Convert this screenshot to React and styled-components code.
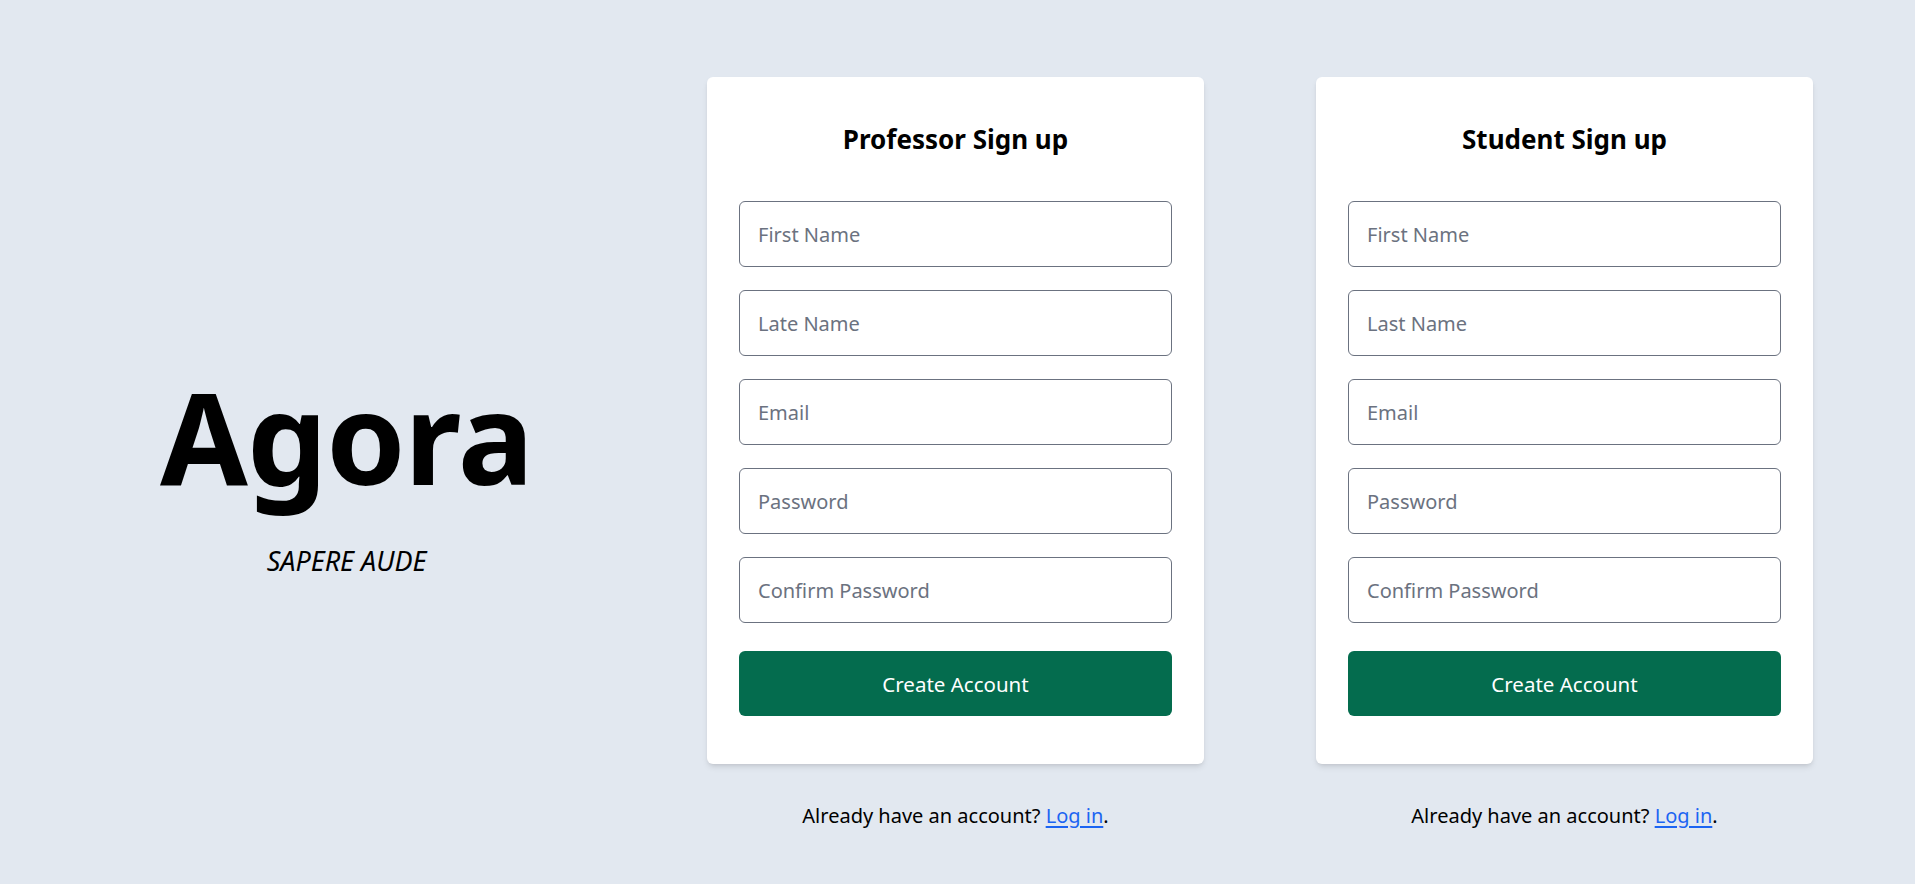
import React from 'react'
import styled, { createGlobalStyle } from 'styled-components'

const GlobalStyle = createGlobalStyle`
    * {
        box-sizing: border-box;
    }
    body {
        margin: 0;
        background: #e2e8f0;
        font-family: "Noto Sans", "Open Sans", sans-serif;
        color: #000;
    }
`

const Page = styled.main`
    display: grid;
    grid-template-columns: repeat(3, 497px);
    column-gap: 112px;
    justify-content: center;
    align-items: start;
    min-height: 100vh;
    padding: 77px 4px 0 0;
`

const Hero = styled.section`
    display: flex;
    flex-direction: column;
    align-items: center;
    padding-top: 283px;
`

const Brand = styled.h1`
    margin: 0;
    font-size: 127px;
    font-weight: 700;
    line-height: 1.2;
    letter-spacing: -1px;
`

const Motto = styled.p`
    margin: 30px 0 0;
    font-size: 27px;
    font-style: italic;
`

const Column = styled.section`
    display: flex;
    flex-direction: column;
`

const Card = styled.form`
    display: flex;
    flex-direction: column;
    gap: 23px;
    padding: 43px 32px 48px;
    background: #fff;
    border-radius: 6px;
    box-shadow: 0 4px 6px -1px rgba(0, 0, 0, 0.1), 0 2px 4px -2px rgba(0, 0, 0, 0.1);
`

const Title = styled.h2`
    margin: 0 0 20px;
    text-align: center;
    font-size: 26px;
    font-weight: 700;
    line-height: 38px;
`

const Field = styled.input`
    height: 66px;
    padding: 0 18px;
    border: 1px solid #6b7280;
    border-radius: 6px;
    background: #fff;
    font-family: inherit;
    font-size: 20px;
    color: #111827;
    outline: none;

    &::placeholder {
        color: #6b7280;
    }
`

const Submit = styled.button`
    height: 65px;
    margin-top: 5px;
    border: none;
    border-radius: 6px;
    background: #046c4e;
    color: #fff;
    font-family: inherit;
    font-size: 20.5px;
    cursor: pointer;
`

const Footer = styled.p`
    margin: 38px 0 0;
    text-align: center;
    font-size: 20px;
`

const LoginLink = styled.a`
    color: #1c64f2;
    text-decoration: underline;
    text-underline-offset: 3px;
`

const forms = [
    {
        title: 'Professor Sign up',
        fields: ['First Name', 'Late Name', 'Email', 'Password', 'Confirm Password'],
    },
    {
        title: 'Student Sign up',
        fields: ['First Name', 'Last Name', 'Email', 'Password', 'Confirm Password'],
    },
]

const typeFor = label => {
    if (label === 'Email') return 'email'
    if (label.includes('Password')) return 'password'
    return 'text'
}

const SignupForm = ({ title, fields }) => (
    <Column>
        <Card onSubmit={e => e.preventDefault()}>
            <Title>{title}</Title>
            {fields.map(f => (
                <Field key={f} type={typeFor(f)} placeholder={f} />
            ))}
            <Submit type="submit">Create Account</Submit>
        </Card>
        <Footer>
            Already have an account? <LoginLink href="#">Log in</LoginLink>.
        </Footer>
    </Column>
)

const App = () => (
    <>
        <GlobalStyle />
        <Page>
            <Hero>
                <Brand>Agora</Brand>
                <Motto>SAPERE AUDE</Motto>
            </Hero>
            {forms.map(f => (
                <SignupForm key={f.title} title={f.title} fields={f.fields} />
            ))}
        </Page>
    </>
)

export default App
